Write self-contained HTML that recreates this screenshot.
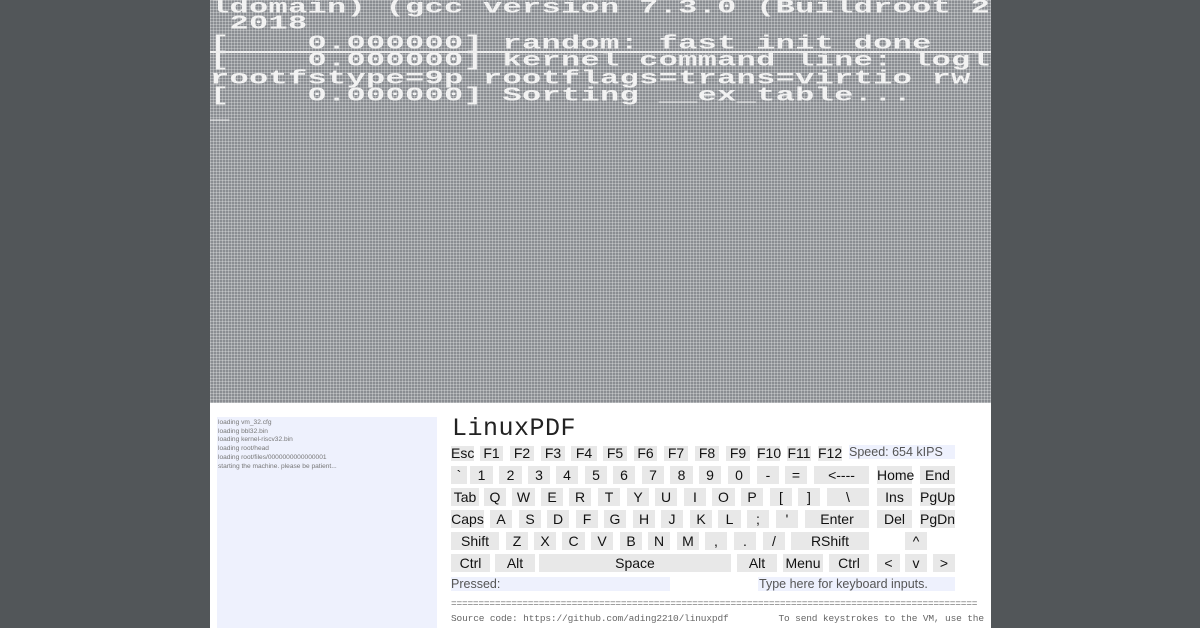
<!DOCTYPE html>
<html><head><meta charset="utf-8"><style>
*{margin:0;padding:0;box-sizing:border-box}
body{width:1200px;height:628px;overflow:hidden;background:#525659;position:relative;font-family:"Liberation Sans",Arial,sans-serif}
#page{position:absolute;left:210px;top:0;width:781px;height:628px;background:#fff;overflow:hidden}
#screen{position:absolute;left:0;top:0;width:781px;height:403px;background-color:#8a8d92;
background-image:repeating-linear-gradient(90deg,rgba(255,255,255,.28) 0 1px,transparent 1px 3px),repeating-linear-gradient(0deg,rgba(255,255,255,.28) 0 1px,transparent 1px 3px);overflow:hidden}
.tl{position:absolute;left:0;font-family:"Liberation Mono",monospace;font-weight:bold;font-size:32px;color:#f2f2f2;white-space:pre;transform:scaleY(.6);transform-origin:0 0;line-height:32px;letter-spacing:.3px}
#log{position:absolute;left:7px;top:417px;width:220px;height:220px;background:#eef1fd;font-size:6.6px;color:#777;padding:2px 1px;line-height:8.7px}
.k{position:absolute;background:#e8e8e8;font-size:14px;color:#111;text-align:center;height:18px;line-height:18px}
.b{position:absolute;background:#eef1fd;font-size:12.5px;color:#555;height:14px;line-height:14px}
.m{position:absolute;font-family:"Liberation Mono",monospace;font-size:9.5px;color:#666;white-space:pre}
</style></head><body>
<div id="page">
<div id="screen">
<div class="tl" style="top:-2px">ldomain) (gcc version 7.3.0 (Buildroot 2</div>
<div class="tl" style="top:14px"> 2018</div>
<div class="tl" style="top:34px">[    0.000000] random: fast init done</div>
<div class="tl" style="top:51px">[    0.000000] kernel command line: logl</div>
<div class="tl" style="top:69px">rootfstype=9p rootflags=trans=virtio rw</div>
<div class="tl" style="top:86px">[    0.000000] Sorting __ex_table...</div>
<div class="tl" style="top:104px">_</div>
<div style="position:absolute;left:0;top:51px;width:781px;height:2px;background:#eee"></div>
</div>
<div id="log">loading vm_32.cfg<br>loading bbl32.bin<br>loading kernel-riscv32.bin<br>loading root/head<br>loading root/files/0000000000000001<br>starting the machine. please be patient...</div>
<div style="position:absolute;left:242px;top:414px;font-family:'Liberation Mono',monospace;font-size:25px;color:#222;letter-spacing:.5px">LinuxPDF</div>
<div id="keys"></div>
<div class="b" style="left:639px;top:445px;width:106px">Speed: 654 kIPS</div>
<div class="b" style="left:241px;top:577px;width:219px">Pressed:</div>
<div class="b" style="left:548px;top:577px;width:197px;padding-left:1px">Type here for keyboard inputs.</div>
<div class="m" style="left:241px;top:598px;letter-spacing:-0.22px">================================================================================================</div>
<div class="m" style="left:241px;top:613px;letter-spacing:-0.15px">Source code: https://github.com/ading2210/linuxpdf         To send keystrokes to the VM, use the</div>
</div>
<script>
const rows=[
[446,[["Esc",451,474],["F1",480,503],["F2",510,534],["F3",541,565],["F4",571,597],["F5",603,627],["F6",634,657],["F7",664,688],["F8",695,719],["F9",726,750],["F10",757,780],["F11",787,811],["F12",818,842]]],
[466,[["`",451,467],["1",470,493],["2",499,522],["3",528,550],["4",556,578],["5",585,607],["6",613,635],["7",642,664],["8",670,693],["9",699,721],["0",728,750],["-",757,779],["=",785,807],["<----",814,869],["Home",877,912],["End",920,955]]],
[488,[["Tab",451,479],["Q",484,506],["W",512,535],["E",541,563],["R",569,591],["T",598,620],["Y",627,649],["U",655,677],["I",684,706],["O",712,735],["P",741,763],["[",770,792],["]",798,820],["\\",827,869],["Ins",877,912],["PgUp",920,955]]],
[510,[["Caps",451,484],["A",490,512],["S",519,541],["D",547,569],["F",576,598],["G",604,626],["H",633,655],["J",661,683],["K",690,712],["L",718,741],[";",747,769],["'",776,798],["Enter",805,869],["Del",877,912],["PgDn",920,955]]],
[532,[["Shift",451,499],["Z",506,528],["X",534,556],["C",562,585],["V",591,613],["B",620,642],["N",648,670],["M",677,699],[",",705,727],[".",734,756],["/",763,785],["RShift",791,869],["^",905,927]]],
[554,[["Ctrl",451,490],["Alt",495,535],["Space",539,731],["Alt",737,777],["Menu",783,823],["Ctrl",829,869],["<",877,900],["v",905,927],[">",933,955]]]];
let h="";
for(const [y,ks] of rows)for(const [t,a,b] of ks){const e=t.replace(/&/g,"&amp;").replace(/</g,"&lt;");h+=`<div class="k" style="left:${a-210}px;top:${y}px;width:${b-a}px;${y==446?'height:15px;line-height:15px':''}">${e}</div>`}
document.getElementById("keys").innerHTML=h;
</script>
</body></html>
